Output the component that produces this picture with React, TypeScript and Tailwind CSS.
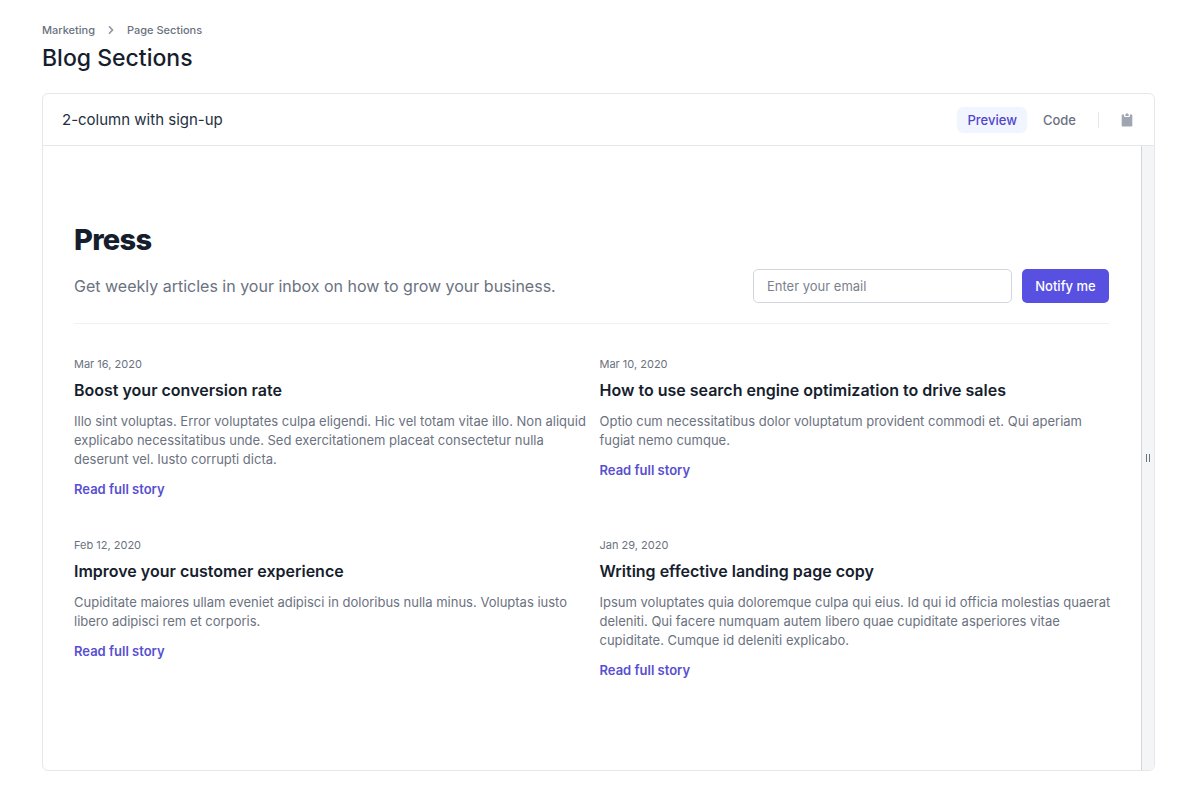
import { useState } from "react";

// ── Post data ───────────────────────────────────────────────────────────
const posts = [
    {
        date: "Mar 16, 2020",
        datetime: "2020-03-16",
        title: "Boost your conversion rate",
        description:
            "Illo sint voluptas. Error voluptates culpa eligendi. Hic vel totam vitae illo. Non aliquid explicabo necessitatibus unde. Sed exercitationem placeat consectetur nulla deserunt vel. Iusto corrupti dicta.",
    },
    {
        date: "Mar 10, 2020",
        datetime: "2020-03-10",
        title: "How to use search engine optimization to drive sales",
        description:
            "Optio cum necessitatibus dolor voluptatum provident commodi et. Qui aperiam fugiat nemo cumque.",
    },
    {
        date: "Feb 12, 2020",
        datetime: "2020-02-12",
        title: "Improve your customer experience",
        description:
            "Cupiditate maiores ullam eveniet adipisci in doloribus nulla minus. Voluptas iusto libero adipisci rem et corporis.",
    },
    {
        date: "Jan 29, 2020",
        datetime: "2020-01-29",
        title: "Writing effective landing page copy",
        description:
            "Ipsum voluptates quia doloremque culpa qui eius. Id qui id officia molestias quaerat deleniti. Qui facere numquam autem libero quae cupiditate asperiores vitae cupiditate. Cumque id deleniti explicabo.",
    },
];

const tabs = ["Preview", "Code"];

function Breadcrumbs() {
    return (
        <nav aria-label="Breadcrumb" className="flex items-center text-[11px] leading-4 font-medium text-[#6b7280]">
            <a href="#">Marketing</a>
            <svg className="mx-2 size-4 text-[#8f96a3]" viewBox="0 0 20 20" fill="currentColor" aria-hidden="true">
                <path
                    fillRule="evenodd"
                    clipRule="evenodd"
                    d="M7.293 14.707a1 1 0 010-1.414L10.586 10 7.293 6.707a1 1 0 011.414-1.414l4 4a1 1 0 010 1.414l-4 4a1 1 0 01-1.414 0z"
                />
            </svg>
            <a href="#">Page Sections</a>
        </nav>
    );
}

function Toolbar() {
    const [active, setActive] = useState("Preview");

    return (
        <header className="flex h-[51px] items-center justify-between px-[19px]">
            <h2 className="text-[15px] leading-5 text-[#252f3f]">2-column with sign-up</h2>
            <div className="flex items-center">
                {tabs.map((tab) => (
                    <button
                        key={tab}
                        type="button"
                        onClick={() => setActive(tab)}
                        className={`mr-1.5 h-[26px] cursor-pointer rounded-md px-2.5 text-[13px] leading-4 font-medium ${
                            active === tab ? "bg-[#f0f5ff] text-[#5145cd]" : "text-[#6b7280]"
                        }`}
                    >
                        {tab}
                    </button>
                ))}
                <span className="ml-1.5 h-4 w-px bg-[#e5e7eb]" />
                <button type="button" aria-label="Copy code" className="ml-5 cursor-pointer text-[#9fa6b2]">
                    <svg className="size-4" viewBox="0 0 16 16" fill="currentColor" aria-hidden="true">
                        <path d="M3.5 2.5H5V4a1 1 0 0 0 1 1h4a1 1 0 0 0 1-1V2.500h1.500a.8.8 0 0 1 .8.8v10.400a.8.8 0 0 1-.8.8h-9a.8.8 0 0 1-.8-.8V3.300a.8.8 0 0 1 .8-.8z" />
                        <path d="M6.300 2.300H7a1 1 0 0 1 2 0h.7V4H6.300z" />
                    </svg>
                </button>
            </div>
        </header>
    );
}

function SignUp() {
    return (
        <form className="flex gap-2.5" onSubmit={(e) => e.preventDefault()}>
            <input
                type="email"
                aria-label="Email address"
                placeholder="Enter your email"
                className="h-[34px] w-[259px] rounded-[5px] border border-[#d2d6dc] bg-white px-[13px] text-[13px] leading-5 text-[#252f3f] placeholder:text-[#7b818c]"
            />
            <button
                type="submit"
                className="h-[34px] w-[87px] cursor-pointer rounded-[5px] bg-[#5850e0] text-[13px] leading-5 font-medium text-white"
            >
                Notify me
            </button>
        </form>
    );
}

export default function App() {
    return (
        <main className="bg-white pt-[22px] pr-[45px] pb-[26px] pl-[42px] font-['Inter','Liberation_Sans',sans-serif] text-[#161e2e]">
            <Breadcrumbs />
            <h1 className="mt-1 text-[23px] leading-8 font-medium">Blog Sections</h1>

            <section className="mt-[19px] overflow-hidden rounded-md border border-[#e5e7eb]">
                <Toolbar />

                <div className="flex border-t border-[#e5e7eb]">
                    <div className="grow pt-[76px] pr-8 pb-[89px] pl-[31px]">
                        <h2 className="text-[29px] leading-9 font-extrabold tracking-tight">Press</h2>
                        <div className="mt-[11px] flex items-center justify-between border-b border-[#f0f1f3] pb-5">
                            <p className="text-[16px] leading-6 text-[#6b7280]">
                                Get weekly articles in your inbox on how to grow your business.
                            </p>
                            <SignUp />
                        </div>

                        <div className="mt-8 grid grid-cols-2 gap-x-4 gap-y-[37px]">
                            {posts.map((post) => (
                                <article key={post.title}>
                                    <time dateTime={post.datetime} className="block text-[11px] leading-4 text-[#6b7280]">
                                        {post.date}
                                    </time>
                                    <h3 className="mt-2 text-[16px] leading-5 font-semibold">{post.title}</h3>
                                    <p className="-mr-2 mt-3 text-[13px] leading-[19px] text-[#6b7280]">
                                        {post.description}
                                    </p>
                                    <a
                                        href="#"
                                        className="mt-2.5 inline-block text-[13px] leading-5 font-semibold text-[#5850d0]"
                                    >
                                        Read full story
                                    </a>
                                </article>
                            ))}
                        </div>
                    </div>

                    {/* Resize handle */}
                    <div className="flex w-[13px] shrink-0 items-center justify-center gap-0.5 border-l border-[#d2d6dc] bg-[#f4f5f7]">
                        <span className="h-2 w-px bg-[#6b7280]" />
                        <span className="h-2 w-px bg-[#6b7280]" />
                    </div>
                </div>
            </section>
        </main>
    );
}
